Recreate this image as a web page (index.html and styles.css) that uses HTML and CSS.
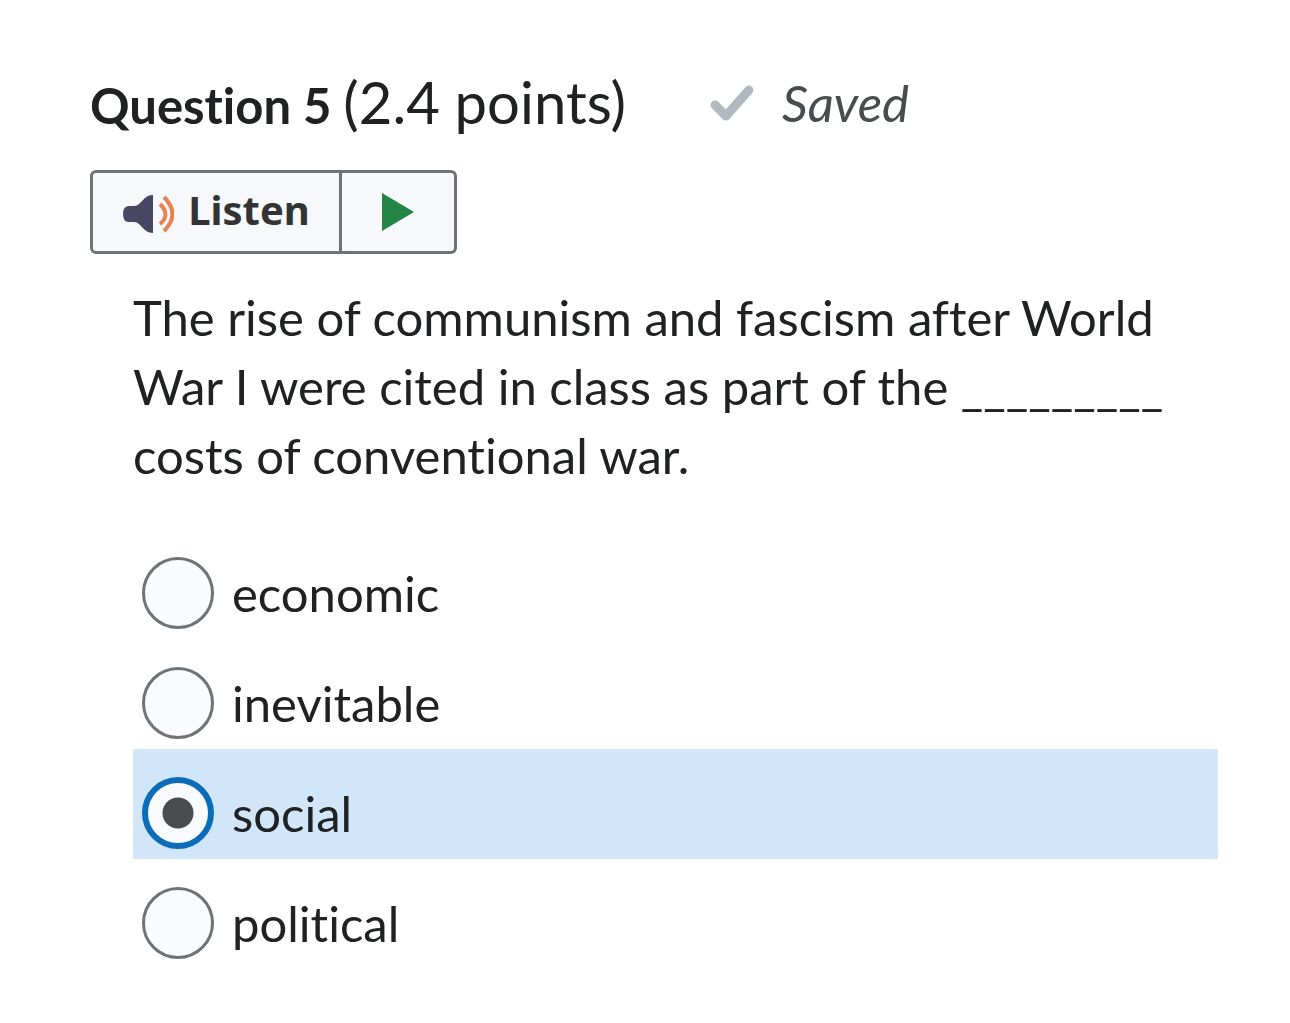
FILE: index.html
```
<!DOCTYPE html>
<html lang="en">
<head>
<meta charset="utf-8">
<meta name="viewport" content="width=device-width, initial-scale=1">
<title>Question 5</title>
<link rel="stylesheet" href="styles.css">
</head>
<body>
<main class="quiz">
  <header class="heading">
    <h1 class="title">Question 5 <span class="points">(2.4 points)</span></h1>
    <div class="status">
      <svg class="check" viewBox="0 0 44 36" aria-hidden="true"><path d="M5 20l11 11L39 5" fill="none" stroke="#b1b9be" stroke-width="9" stroke-linecap="round" stroke-linejoin="round"/></svg>
      <em class="saved">Saved</em>
    </div>
  </header>
  <div class="reader">
    <button class="listen" type="button">
      <svg class="speaker" viewBox="0 0 52 40" aria-hidden="true"><path d="M6 12h6q3 0 5-2l6-6q3-3 7-3h1v38h-1q-4 0-7-3l-6-6q-2-2-5-2H6q-5-1-5-8t5-8z" fill="#484663"/><path d="M38 10q11 11 0 20M42 3q17 17 0 34" fill="none" stroke="#e8824f" stroke-width="4"/></svg>
      <span>Listen</span>
    </button>
    <button class="play" type="button" aria-label="Play">
      <svg class="triangle" viewBox="0 0 32 38" aria-hidden="true"><path d="M0 0l32 19L0 38z" fill="#238443"/></svg>
    </button>
  </div>
  <form class="question">
    <p class="prompt">The rise of communism and fascism after World War I were cited in class as part of the _________ costs of conventional war.</p>
    <div class="answers" role="radiogroup" aria-label="Answers">
      <label class="answer"><input class="radio" type="radio" name="answer"><span>economic</span></label>
      <label class="answer"><input class="radio" type="radio" name="answer"><span>inevitable</span></label>
      <label class="answer"><input class="radio" type="radio" name="answer" checked><span>social</span></label>
      <label class="answer"><input class="radio" type="radio" name="answer"><span>political</span></label>
    </div>
  </form>
</main>
</body>
</html>
```
FILE: styles.css
```
* { box-sizing: border-box; }
body { margin: 0; background: #fff; color: #202122; font-family: Lato, sans-serif; font-variant-ligatures: none; }
.quiz { padding: 68px 72px 40px 90px; }
.heading { display: flex; align-items: center; gap: 84px; height: 70px; }
.title { margin: 0; font-size: 49px; line-height: 68px; font-weight: 700; white-space: nowrap; }
.points { font-size: 58px; font-weight: 400; }
.status { display: flex; align-items: center; gap: 28px; }
.check { width: 44px; height: 36px; }
.saved { font-size: 51px; line-height: 68px; color: #494c4e; }
.reader { display: inline-flex; height: 84px; margin-top: 32px; border: 3px solid #6e7376; border-radius: 6px; background: #f6f8fc; overflow: hidden; }
.reader button { border: 0; background: transparent; padding: 0; }
.reader .listen { display: flex; align-items: center; gap: 14px; width: 246px; padding-bottom: 4px; justify-content: center; font: 700 40px/48px "Noto Sans", sans-serif; color: #333; }
.speaker { width: 52px; height: 40px; margin-top: 8px; }
.reader .play { display: flex; align-items: center; justify-content: center; width: 115px; border-left: 3px solid #6e7376; }
.triangle { width: 32px; height: 38px; }
.question { padding-left: 43px; }
.prompt { margin: 29px 0 0; font-size: 49px; line-height: 69px; }
.answers { margin-top: 39px; }
.answer { display: flex; align-items: center; gap: 18px; height: 110px; padding: 18px 9px 0; font-size: 49px; line-height: 69px; }
.answer:has(:checked) { background: #d2e6fa; }
.radio { appearance: none; flex: none; width: 72px; height: 72px; margin: 0; border: 3px solid #6e7376; border-radius: 50%; background: #f9fbff; }
.radio:checked { border: 6px solid #0b6cb8; background: radial-gradient(circle, #494c4e 15px, #f9fbff 16px); }
```
